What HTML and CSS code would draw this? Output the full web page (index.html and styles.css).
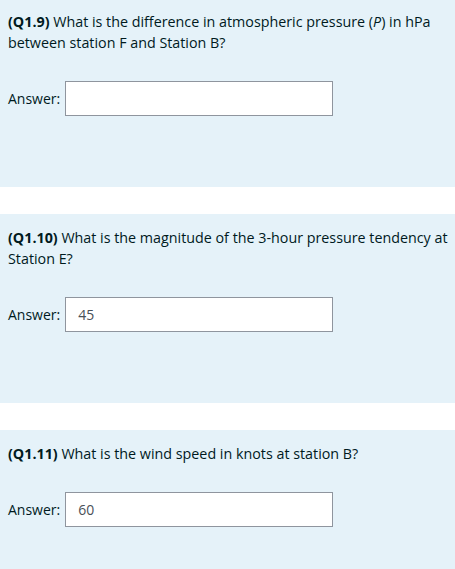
FILE: index.html
```html
<!DOCTYPE html>
<html>
<head>
<meta charset="utf-8">
<link rel="stylesheet" href="styles.css">
</head>
<body>
<div class="page">
  <section class="que">
    <p class="qtext"><strong>(Q1.9)</strong> What is the difference in atmospheric pressure (<em>P</em>) in hPa between station F and Station B?</p>
    <div class="ablock">
      <label class="lbl">Answer:</label>
      <input class="ans" type="text" value="">
    </div>
  </section>
  <section class="que">
    <p class="qtext"><strong>(Q1.10)</strong> What is the magnitude of the 3-hour pressure tendency at Station E?</p>
    <div class="ablock">
      <label class="lbl">Answer:</label>
      <input class="ans" type="text" value="45">
    </div>
  </section>
  <section class="que">
    <p class="qtext"><strong>(Q1.11)</strong> What is the wind speed in knots at station B?</p>
    <div class="ablock">
      <label class="lbl">Answer:</label>
      <input class="ans" type="text" value="60">
    </div>
  </section>
</div>
</body>
</html>
```

FILE: styles.css
```css
html, body {
  margin: 0;
  padding: 0;
  background: #ffffff;
}
body {
  font-family: "Open Sans", "Noto Sans", sans-serif;
  font-size: 14.3px;
  line-height: 21px;
  color: #001a1e;
  overflow: hidden;
}
.page {
  margin-top: -2px;
  display: flex;
  flex-direction: column;
  gap: 27px;
}
.que {
  background: #e5f2f9;
  padding: 13px 2px 71px 8px;
}
.qtext {
  margin: 0 0 28px 0;
}
.qtext strong {
  font-weight: 700;
}
.ablock {
  display: flex;
  align-items: center;
  gap: 5px;
}
.lbl {
  font-size: 14px;
}
.ans {
  box-sizing: border-box;
  width: 268px;
  height: 35px;
  margin: 0;
  padding: 6px 12px;
  border: 1px solid #8f959e;
  border-radius: 0;
  background: #fff;
  font-family: "Open Sans", "Noto Sans", sans-serif;
  font-size: 14px;
  line-height: 21px;
  color: #495057;
  outline: none;
}
```
